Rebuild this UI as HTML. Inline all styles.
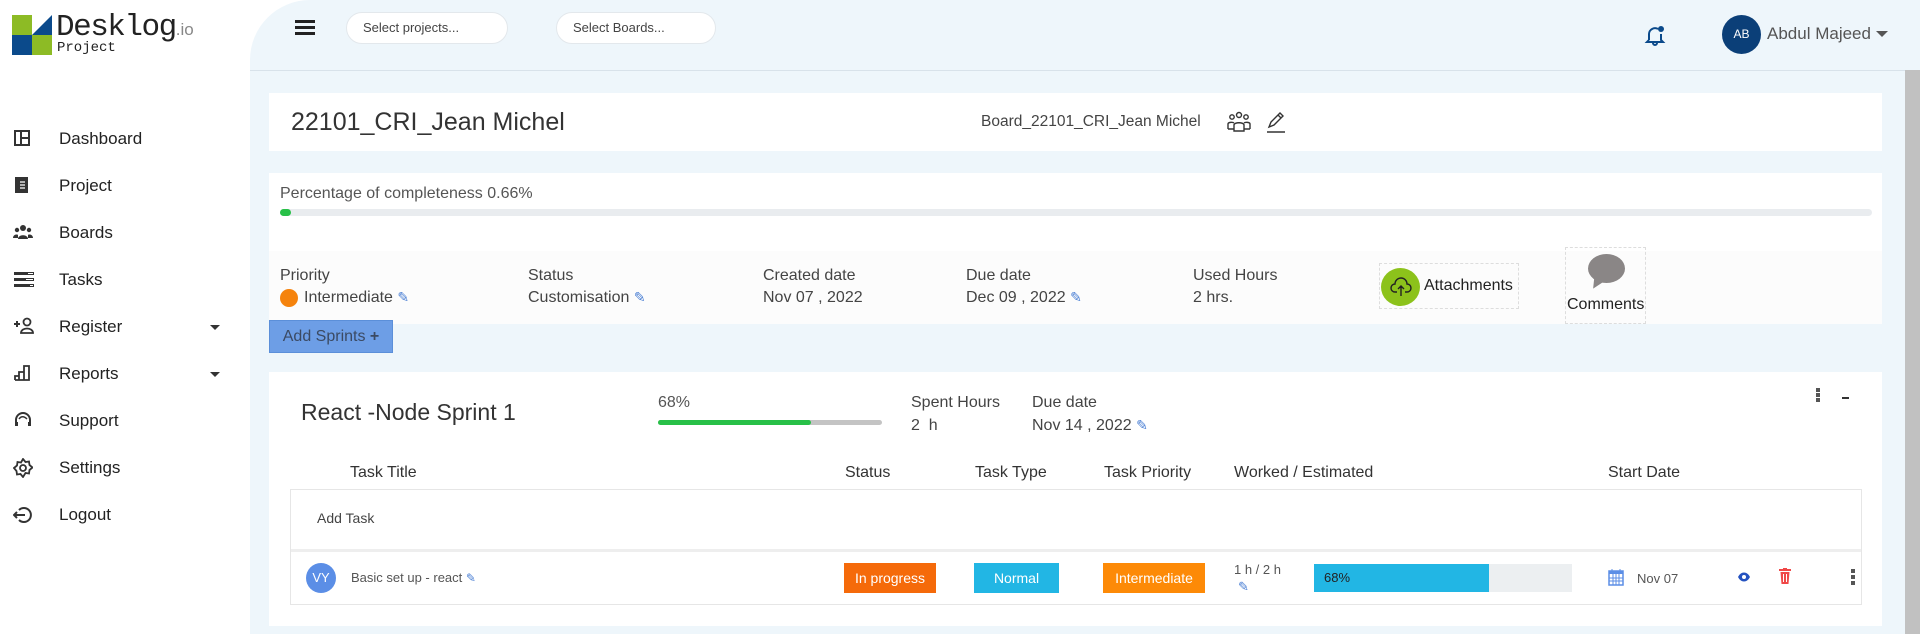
<!DOCTYPE html>
<html><head><meta charset="utf-8"><style>
*{box-sizing:border-box;margin:0;padding:0}
body{width:1920px;height:634px;overflow:hidden;background:#fff;font-family:"Liberation Sans",sans-serif;color:#333;position:relative}
.a{position:absolute}
.main{position:absolute;left:250px;top:0;width:1670px;height:634px;background:#eef6fb;border-top-left-radius:60px}
.hdr{position:absolute;left:250px;top:70px;width:1655px;height:1px;background:#d8e2ea}
.pill{position:absolute;background:#fff;border:1px solid #e3e8ec;border-radius:16px;font-size:13px;color:#444;padding:0 0 0 16px;line-height:30px}
.card{position:absolute;background:#fff}
.side{position:absolute;left:59px;font-size:17px;color:#222}
.side svg{position:absolute;left:-46px;top:0}
.lbl{font-size:16px;color:#444}
.badge{position:absolute;height:30px;color:#fff;font-size:14px;text-align:center;line-height:30px}
.pen{color:#4a7fd4;font-size:14px}
</style></head><body>
<!-- logo -->
<div class="a" style="left:12px;top:15px;width:20px;height:20px;background:#8dbb25"></div>
<div class="a" style="left:32px;top:15px;width:0;height:0;border-left:20px solid transparent;border-bottom:20px solid #0b4a8b"></div>
<div class="a" style="left:12px;top:35px;width:20px;height:20px;background:#0b4a8b"></div>
<div class="a" style="left:32px;top:35px;width:20px;height:20px;background:#8dbb25"></div>
<div class="a" style="left:56px;top:10px;font-family:'Liberation Mono',monospace;font-size:31px;color:#222;letter-spacing:-1.5px">Desklog<span style="font-family:'Liberation Sans';font-size:17px;color:#888;letter-spacing:0">.io</span></div>
<div class="a" style="left:57px;top:40px;font-family:'Liberation Mono',monospace;font-size:14px;color:#222">Project</div>
<!-- sidebar -->
<div class="side" style="top:129px"><svg width="18" height="18" viewBox="0 0 18 18"><rect x="2" y="2" width="14" height="14" fill="none" stroke="#333" stroke-width="2"/><path d="M8 2v14M8 9h8" stroke="#333" stroke-width="2"/></svg>Dashboard</div>
<div class="side" style="top:176px"><svg width="18" height="18" viewBox="0 0 18 18"><rect x="2" y="1" width="13" height="16" fill="#333"/><path d="M7 6h5M7 9h5M7 12h5" stroke="#fff" stroke-width="1.3"/></svg>Project</div>
<div class="side" style="top:223px"><svg width="20" height="18" viewBox="0 0 20 18"><circle cx="10" cy="5" r="3" fill="#333"/><circle cx="4" cy="7" r="2.2" fill="#333"/><circle cx="16" cy="7" r="2.2" fill="#333"/><path d="M5 16c0-5 10-5 10 0z M0 15c0-4 5-4 5-3v3z M20 15c0-4-5-4-5-3v3z" fill="#333"/></svg>Boards</div>
<div class="side" style="top:270px"><svg width="22" height="18" viewBox="0 0 22 18"><rect x="1" y="2" width="20" height="3" fill="#333"/><rect x="1" y="8" width="20" height="3" fill="#333"/><rect x="1" y="14" width="20" height="3" fill="#333"/><rect x="15" y="3" width="5" height="1" fill="#fff"/><rect x="13" y="9" width="7" height="1" fill="#fff"/><rect x="17" y="15" width="3" height="1" fill="#fff"/></svg>Tasks</div>
<div class="side" style="top:317px"><svg width="22" height="18" viewBox="0 0 22 18"><path d="M1 7h6M4 4v6" stroke="#333" stroke-width="2"/><circle cx="14" cy="5" r="3.5" fill="none" stroke="#333" stroke-width="1.8"/><path d="M8 16c0-6 12-6 12 0z" fill="none" stroke="#333" stroke-width="1.8"/></svg>Register<span style="position:absolute;left:151px;top:8px;border:5px solid transparent;border-top:5px solid #333"></span></div>
<div class="side" style="top:364px"><svg width="18" height="18" viewBox="0 0 18 18"><path d="M2 16h14V2h-5v14M11 8H6v8M6 12H2v4" fill="none" stroke="#333" stroke-width="1.8"/></svg>Reports<span style="position:absolute;left:151px;top:8px;border:5px solid transparent;border-top:5px solid #333"></span></div>
<div class="side" style="top:411px"><svg width="20" height="18" viewBox="0 0 20 18"><path d="M3 14V9a7 7 0 0 1 14 0v5" fill="none" stroke="#333" stroke-width="2"/><path d="M6 8c2-3 5-3 8 0" fill="none" stroke="#333" stroke-width="1.5"/><rect x="2" y="11" width="3" height="4" fill="#333"/><rect x="15" y="11" width="3" height="4" fill="#333"/></svg>Support</div>
<div class="side" style="top:458px"><svg width="20" height="20" viewBox="0 0 20 20"><path d="M10 1l2.5 3 3.5-.5.5 3.5 3 2.5-3 2.5-.5 3.5-3.5-.5L10 19l-2.5-3-3.5.5-.5-3.5L1 10l3-2.5.5-3.5 3.5.5z" fill="none" stroke="#333" stroke-width="1.8"/><circle cx="10" cy="10" r="3" fill="none" stroke="#333" stroke-width="1.8"/></svg>Settings</div>
<div class="side" style="top:505px"><svg width="20" height="20" viewBox="0 0 20 20"><path d="M6 5a7 7 0 1 1 0 10" fill="none" stroke="#333" stroke-width="2"/><path d="M1 10h11M4 7l-3 3 3 3" fill="none" stroke="#333" stroke-width="2"/></svg>Logout</div>

<div class="main"></div>
<div class="hdr"></div>
<!-- header -->
<div class="a" style="left:295px;top:20px;width:20px;height:3px;background:#222;box-shadow:0 6px 0 #222,0 12px 0 #222"></div>
<div class="a" style="left:295px;top:20px;width:3px;height:3px;background:#222"></div>
<div class="pill" style="left:346px;top:12px;width:162px;height:32px">Select projects...</div>
<div class="pill" style="left:556px;top:12px;width:160px;height:32px">Select Boards...</div>
<svg class="a" style="left:1644px;top:24px" width="22" height="22" viewBox="0 0 22 22"><path d="M5 16V10a6 6 0 0 1 9-5M17 10v6l2 2H3l2-2M9 19a2 2 0 0 0 4 0" fill="none" stroke="#0b4a8b" stroke-width="2"/><circle cx="17" cy="5" r="3" fill="#0b4a8b"/></svg>
<div class="a" style="left:1722px;top:15px;width:39px;height:39px;border-radius:50%;background:#0b3f78;color:#fff;font-size:12px;text-align:center;line-height:39px">AB</div>
<div class="a" style="left:1767px;top:24px;font-size:17px;color:#555">Abdul Majeed</div>
<div class="a" style="left:1876px;top:31px;border:6px solid transparent;border-top:6px solid #555"></div>
<div class="a" style="left:1905px;top:70px;width:15px;height:564px;background:#c1c1c1"></div>

<!-- title card -->
<div class="card" style="left:269px;top:93px;width:1613px;height:58px"></div>
<div class="a" style="left:291px;top:108px;font-size:25px;color:#333">22101_CRI_Jean Michel</div>
<div class="a" style="left:981px;top:113px;font-size:15.5px;color:#444">Board_22101_CRI_Jean Michel</div>
<svg class="a" style="left:1227px;top:111px" width="24" height="22" viewBox="0 0 24 22"><g fill="none" stroke="#333" stroke-width="1.4"><circle cx="12" cy="4" r="2.5"/><circle cx="5" cy="6" r="2.2"/><circle cx="19" cy="6" r="2.2"/><path d="M7 20v-6c0-3 10-3 10 0v6zM1 18v-5c0-2 5-2 6-1M23 18v-5c0-2-5-2-6-1M1 18h6M17 18h6"/></g></svg>
<svg class="a" style="left:1265px;top:110px" width="24" height="24" viewBox="0 0 24 24"><path d="M4 17l2-5 9-9 3 3-9 9zM13 5l3 3M2 22h18" fill="none" stroke="#333" stroke-width="1.4"/></svg>

<!-- details card -->
<div class="card" style="left:269px;top:173px;width:1613px;height:151px"></div>
<div class="a" style="left:269px;top:251px;width:1613px;height:73px;background:#fcfcfc"></div>
<div class="a" style="left:280px;top:185px;font-size:16px;color:#555">Percentage of completeness 0.66%</div>
<div class="a" style="left:280px;top:209px;width:1592px;height:7px;background:#e9ecef;border-radius:4px"></div>
<div class="a" style="left:280px;top:209px;width:11px;height:7px;background:#28c048;border-radius:4px"></div>
<div class="a lbl" style="left:280px;top:267px">Priority</div>
<div class="a" style="left:280px;top:289px;width:18px;height:18px;border-radius:50%;background:#f5830d"></div>
<div class="a lbl" style="left:304px;top:289px">Intermediate <span class="pen">&#9998;</span></div>
<div class="a lbl" style="left:528px;top:267px">Status</div>
<div class="a lbl" style="left:528px;top:289px">Customisation <span class="pen">&#9998;</span></div>
<div class="a lbl" style="left:763px;top:267px">Created date</div>
<div class="a lbl" style="left:763px;top:289px">Nov 07 , 2022</div>
<div class="a lbl" style="left:966px;top:267px">Due date</div>
<div class="a lbl" style="left:966px;top:289px">Dec 09 , 2022 <span class="pen">&#9998;</span></div>
<div class="a lbl" style="left:1193px;top:267px">Used Hours</div>
<div class="a lbl" style="left:1193px;top:289px">2 hrs.</div>
<div class="a" style="left:1379px;top:263px;width:140px;height:46px;border:1px dashed #ddd"></div>
<div class="a" style="left:1381px;top:268px;width:39px;height:38px;border-radius:50%;background:#8cc21b"></div>
<svg class="a" style="left:1390px;top:277px" width="22" height="20" viewBox="0 0 22 20"><path d="M7 15H5a4 4 0 0 1 0-8 6 6 0 0 1 12 0 4 4 0 0 1 0 8h-2M11 19V9M8 12l3-3 3 3" fill="none" stroke="#222" stroke-width="1.4"/></svg>
<div class="a" style="left:1424px;top:277px;font-size:16px;color:#222">Attachments</div>
<div class="a" style="left:1565px;top:247px;width:81px;height:77px;border:1px dashed #ddd"></div>
<div class="a" style="left:1588px;top:254px;width:37px;height:29px;border-radius:50%;background:#8a8686"></div>
<div class="a" style="left:1592px;top:278px;border-left:3px solid transparent;border-right:9px solid transparent;border-top:12px solid #8a8686;transform:rotate(20deg)"></div>
<div class="a" style="left:1567px;top:296px;font-size:16px;color:#222">Comments</div>
<div class="a" style="left:269px;top:320px;width:124px;height:33px;background:#6d9ee6;border:1px solid #5b8fd9;color:#3b4a63;font-size:16px;line-height:31px;text-align:center">Add Sprints <b>+</b></div>

<!-- sprint card -->
<div class="card" style="left:269px;top:372px;width:1613px;height:254px"></div>
<div class="a" style="left:301px;top:399px;font-size:23px;color:#333">React -Node Sprint 1</div>
<div class="a lbl" style="left:658px;top:394px;color:#555">68%</div>
<div class="a" style="left:658px;top:420px;width:224px;height:5px;background:#c4c4c4;border-radius:3px"></div>
<div class="a" style="left:658px;top:420px;width:153px;height:5px;background:#28c048;border-radius:3px"></div>
<div class="a lbl" style="left:911px;top:394px">Spent Hours</div>
<div class="a lbl" style="left:911px;top:417px">2 &nbsp;h</div>
<div class="a lbl" style="left:1032px;top:394px">Due date</div>
<div class="a lbl" style="left:1032px;top:417px">Nov 14 , 2022 <span class="pen">&#9998;</span></div>
<div class="a" style="left:1816px;top:388px;width:4px;height:4px;background:#555;box-shadow:0 5px 0 #555,0 10px 0 #555"></div>
<div class="a" style="left:1842px;top:397px;width:7px;height:2px;background:#333"></div>
<div class="a lbl" style="left:350px;top:464px;color:#333">Task Title</div>
<div class="a lbl" style="left:845px;top:464px;color:#333">Status</div>
<div class="a lbl" style="left:975px;top:464px;color:#333">Task Type</div>
<div class="a lbl" style="left:1104px;top:464px;color:#333">Task Priority</div>
<div class="a lbl" style="left:1234px;top:464px;color:#333">Worked / Estimated</div>
<div class="a lbl" style="left:1608px;top:464px;color:#333">Start Date</div>
<div class="a" style="left:290px;top:489px;width:1572px;height:116px;border:1px solid #e6e6e6"></div>
<div class="a" style="left:291px;top:549px;width:1570px;height:3px;background:#eee"></div>
<div class="a" style="left:317px;top:510px;font-size:14px;color:#444">Add Task</div>
<div class="a" style="left:306px;top:563px;width:30px;height:30px;border-radius:50%;background:#5b8ee6;color:#fff;font-size:13px;text-align:center;line-height:30px">VY</div>
<div class="a" style="left:351px;top:570px;font-size:13px;color:#555">Basic set up - react <span class="pen" style="font-size:12px">&#9998;</span></div>
<div class="badge" style="left:844px;top:563px;width:92px;background:#f56a0a">In progress</div>
<div class="badge" style="left:974px;top:563px;width:85px;background:#22b6e4">Normal</div>
<div class="badge" style="left:1103px;top:563px;width:102px;background:#fd8a07">Intermediate</div>
<div class="a" style="left:1234px;top:562px;font-size:13px;color:#555">1 h / 2 h</div>
<div class="a pen" style="left:1238px;top:579px;font-size:13px">&#9998;</div>
<div class="a" style="left:1314px;top:564px;width:258px;height:28px;background:#eceff1"></div>
<div class="a" style="left:1314px;top:564px;width:175px;height:28px;background:#22b6e4;font-size:13px;line-height:28px;padding-left:10px;color:#222">68%</div>
<svg class="a" style="left:1608px;top:568px" width="16" height="18" viewBox="0 0 16 18"><rect x="1" y="3" width="14" height="14" fill="none" stroke="#5b8ee6" stroke-width="1.5"/><rect x="1" y="3" width="14" height="3" fill="#5b8ee6"/><path d="M4 1v4M12 1v4M1 10h14M1 13h14M5 6v11M8 6v11M11 6v11" stroke="#5b8ee6" stroke-width="1"/></svg>
<div class="a" style="left:1637px;top:571px;font-size:13px;color:#555">Nov 07</div>
<svg class="a" style="left:1737px;top:571px" width="14" height="12" viewBox="0 0 14 12"><path d="M1 6c3-6 9-6 12 0-3 6-9 6-12 0z" fill="#2452c0"/><circle cx="7" cy="6" r="2" fill="#fff"/></svg>
<svg class="a" style="left:1779px;top:568px" width="12" height="16" viewBox="0 0 12 16"><path d="M0 2h12M4 0h4" stroke="#f04747" stroke-width="2"/><path d="M1.5 4h9l-1 12h-7z" fill="#f04747"/><path d="M4.5 6v8M7.5 6v8" stroke="#fff" stroke-width="1"/></svg>
<div class="a" style="left:1851px;top:569px;width:4px;height:4px;background:#555;box-shadow:0 6px 0 #555,0 12px 0 #555"></div>
</body></html>
